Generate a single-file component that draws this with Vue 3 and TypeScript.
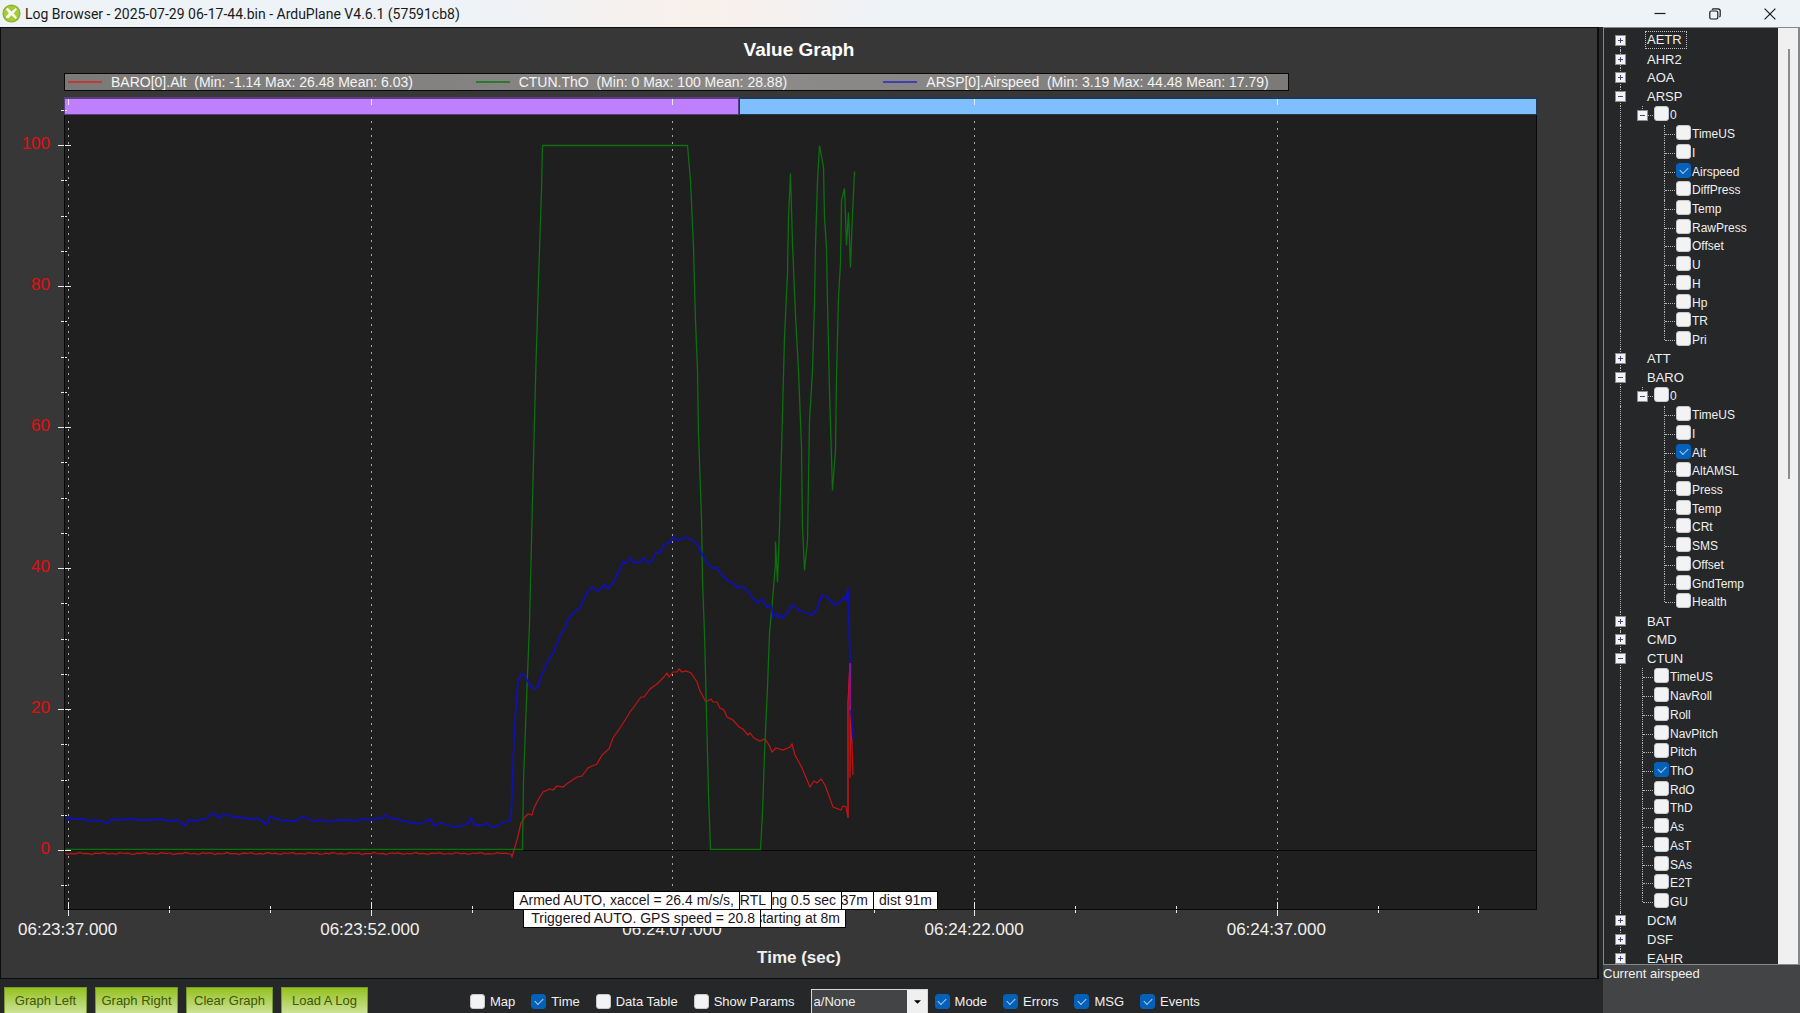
<script setup lang="ts">
import { ref } from 'vue'

interface TreeRow {
  label: string
  kind: 'root' | 'instance' | 'leaf'
  depth: number
  open?: boolean
  checked?: boolean
  last?: boolean
  focused?: boolean
}

const root = (label: string, open = false, focused = false): TreeRow => ({ label, kind: 'root', depth: 0, open, focused })
const instance = (label: string): TreeRow => ({ label, kind: 'instance', depth: 1, open: true })
const leaves = (depth: number, names: string[], checked: string): TreeRow[] =>
  names.map((label, i) => ({ label, kind: 'leaf', depth, checked: label === checked, last: i === names.length - 1 }))

const rows = ref<TreeRow[]>([
  root('AETR', false, true),
  root('AHR2'),
  root('AOA'),
  root('ARSP', true),
  instance('0'),
  ...leaves(2, ['TimeUS', 'I', 'Airspeed', 'DiffPress', 'Temp', 'RawPress', 'Offset', 'U', 'H', 'Hp', 'TR', 'Pri'], 'Airspeed'),
  root('ATT'),
  root('BARO', true),
  instance('0'),
  ...leaves(2, ['TimeUS', 'I', 'Alt', 'AltAMSL', 'Press', 'Temp', 'CRt', 'SMS', 'Offset', 'GndTemp', 'Health'], 'Alt'),
  root('BAT'),
  root('CMD'),
  root('CTUN', true),
  ...leaves(1, ['TimeUS', 'NavRoll', 'Roll', 'NavPitch', 'Pitch', 'ThO', 'RdO', 'ThD', 'As', 'AsT', 'SAs', 'E2T', 'GU'], 'ThO'),
  root('DCM'),
  root('DSF'),
  root('EAHR'),
])

const legend = [
  { color: '#c03a38', text: 'BARO[0].Alt  (Min: -1.14 Max: 26.48 Mean: 6.03)' },
  { color: '#2c7a30', text: 'CTUN.ThO  (Min: 0 Max: 100 Mean: 28.88)' },
  { color: '#4040b0', text: 'ARSP[0].Airspeed  (Min: 3.19 Max: 44.48 Mean: 17.79)' },
]

const yLabels = [100, 80, 60, 40, 20, 0]
const xLabels = ['06:23:37.000', '06:23:52.000', '06:24:07.000', '06:24:22.000', '06:24:37.000']

const majorX = [68, 371, 672, 974, 1277]
const minorX = [169, 270, 472, 572, 773, 874, 1075, 1176, 1378, 1478]
const valueY = (v: number) => Math.round(850 - v * 7.05)
const majorY = yLabels.map(valueY)
const minorY = [-5, 5, 10, 15, 25, 30, 35, 45, 50, 55, 65, 70, 75, 85, 90, 95, 105].map(valueY)

// Altitude on the ground: level with a little sensor noise.
const ground = Array.from({ length: 148 }, (_, i) => {
  const y = 853.5 + Math.sin(i * 2.3) * 0.6 + Math.sin(i * 0.9) * 0.5
  return `${65 + i * 3},${y.toFixed(1)}`
}).join(' ')

const altitude =
  ground +
  ' 509,854 511,854 512,857 514,850 517,840 521,823 525,817 528,814 532,815 534,808 538,800 543,792 550,789 553,790 557,786 563,787 568,783 577,777 582,776 588,768 592,766 597,764 602,755 609,749 613,738 622,725 630,712 636,704 641,697 644,697 650,689 657,684 663,678 667,673 669,677 673,672 677,672 679,669 682,672 686,671 691,673 697,682 700,691 706,702 711,699 713,702 717,702 720,708 724,710 727,717 733,720 739,727 743,729 748,735 750,733 754,738 760,741 765,739 769,745 772,752 776,748 783,750 790,747 792,744 795,755 802,768 810,787 814,781 817,783 821,779 825,785 833,807 841,810 843,806 846,807 848,818 848,703 850,663 850,778 851,713 853,775'

const throttle =
  '65,849 522,849 523,780 526,700 529,623 532,500 535,380 538,280 541,190 542,145 687,145 690,180 693,247 695,320 697,370 698,433 701,517 702,580 704,633 706,713 708,793 710,849 760,849 762,813 764,753 767,687 769,633 772,600 775,563 775,541 777,582 779,527 782,413 784,337 787,273 788,217 790,173 792,243 795,315 798,370 801,447 802,527 804,570 807,540 809,420 812,370 814,303 815,245 817,180 819,145 823,167 824,217 826,247 827,303 829,390 831,457 832,490 835,450 836,377 838,297 840,263 841,200 844,188 846,245 848,212 850,267 852,213 854,171'

const airspeed =
  '65,821 69,817 73,819 82,819 90,821 95,820 100,821 108,823 112,819 118,820 130,819 140,820 150,820 160,819 170,821 177,820 181,822 185,826 189,820 195,821 200,820 207,818 210,815 214,813 217,816 220,818 223,814 230,816 236,817 243,818 250,819 257,818 262,821 267,825 270,816 275,819 280,820 288,821 295,821 303,817 308,819 315,821 322,820 330,822 338,820 345,820 355,821 362,819 372,820 378,818 381,819 385,815 390,818 400,820 408,822 417,824 425,822 430,819 434,826 440,823 447,825 455,827 463,826 468,823 471,818 475,825 483,825 487,823 492,828 498,825 503,823 511,820 512,793 514,740 516,707 518,680 521,674 524,675 527,680 531,687 534,689 538,687 540,680 544,670 550,657 553,654 557,643 562,632 565,629 568,619 572,614 580,608 583,600 587,593 592,587 597,591 602,588 605,584 608,589 613,583 618,573 623,562 626,563 630,558 634,563 640,562 644,558 648,563 653,560 656,552 660,553 664,545 670,542 673,537 678,541 685,537 692,540 697,544 701,552 705,560 712,568 717,568 722,575 728,581 733,583 738,588 741,586 747,590 752,597 757,603 762,599 767,607 771,605 773,617 777,613 778,618 781,615 783,618 787,613 792,605 795,607 800,611 807,613 812,615 817,609 822,595 827,597 835,605 842,600 844,597 846,600 848,588 849,623 850,660 851,710 853,739'

// Log messages pinned to their moment on the time axis; later entries cover earlier ones.
const notes = [
  { text: 'dist 91m', from: 873, to: 938, row: 0 },
  { text: '37m', from: 836, to: 874, row: 0 },
  { text: 'ng 0.5 sec', from: 766, to: 842, row: 0 },
  { text: 'Armed AUTO, xaccel = 26.4 m/s/s,', from: 513, to: 740, row: 0 },
  { text: 'RTL', from: 739, to: 772, row: 0 },
  { text: 'starting at 8m', from: 752, to: 846, row: 1 },
  { text: 'Triggered AUTO. GPS speed = 20.8', from: 523, to: 761, row: 1 },
]
const notePlace = (n: { from: number; to: number }) => ({
  left: `${((n.from - 64) / 1473) * 100}%`,
  width: `${((n.to - n.from) / 1473) * 100}%`,
})

const actions = [
  { label: 'Graph Left', wide: false },
  { label: 'Graph Right', wide: false },
  { label: 'Clear Graph', wide: true },
  { label: 'Load A Log', wide: true },
]
const viewOptions = ref([
  { label: 'Map', on: false },
  { label: 'Time', on: true },
  { label: 'Data Table', on: false },
  { label: 'Show Params', on: false },
])
const overlayOptions = ref([
  { label: 'Mode', on: true },
  { label: 'Errors', on: true },
  { label: 'MSG', on: true },
  { label: 'Events', on: true },
])
const preset = ref('a/None')
</script>

<template>
  <div class="window">
    <header class="titlebar">
      <svg class="logo" viewBox="0 0 20 20" aria-hidden="true">
        <circle cx="10" cy="10" r="9.5" fill="#8fae2a" />
        <circle cx="10" cy="10" r="8.2" fill="#a5cb3a" />
        <path d="M4 5.5 6 4l4 3.8 4.5-3.6 1.3 1.2-3.6 4.4 3.6 4.5-1.6 1.5-4.2-4-3.4 3.2-2.4-.6.1-1.6 2.9-3z" fill="#f6faea" />
      </svg>
      <h1>Log Browser - 2025-07-29 06-17-44.bin - ArduPlane V4.6.1 (57591cb8)</h1>
      <nav class="controls">
        <button type="button" aria-label="Minimize">
          <svg viewBox="0 0 12 12"><path d="M.5 5.5h11" /></svg>
        </button>
        <button type="button" aria-label="Restore">
          <svg viewBox="0 0 12 12">
            <rect x=".8" y="3" width="8" height="8" rx="1.4" />
            <path d="M3 1.6Q3.5.8 4.6.8H9q2.2 0 2.2 2.2v4.4q0 1-.8 1.6" />
          </svg>
        </button>
        <button type="button" aria-label="Close">
          <svg viewBox="0 0 12 12"><path d="M.6.6l10.8 10.8M11.4.6.6 11.4" /></svg>
        </button>
      </nav>
    </header>

    <div class="body">
      <main class="left">
        <section class="graph">
          <h2>Value Graph</h2>
          <ul class="legend">
            <li v-for="item in legend" :key="item.text">
              <i :style="{ background: item.color }"></i>{{ item.text }}
            </li>
          </ul>
          <div class="plot-row">
            <ol class="y-labels">
              <li v-for="v in yLabels" :key="v">{{ v }}</li>
            </ol>
            <div class="plot">
              <svg class="canvas" viewBox="64 97 1473 813" preserveAspectRatio="none" role="img" aria-label="Value Graph">
                <rect x="64" y="97" width="1473" height="813" fill="#1f1f1f" />
                <g class="grid">
                  <line v-for="x in majorX" :key="x" :x1="x + 0.5" :x2="x + 0.5" y1="121" y2="900" />
                </g>
                <path d="M64 850.5H1536" stroke="#080808" />
                <polyline :points="altitude" stroke="#c41414" stroke-width="1.2" />
                <polyline :points="throttle" transform="translate(0.5 0.5)" stroke="#0c700f" stroke-width="1.3" />
                <polyline :points="airspeed" stroke="#1010b4" stroke-width="1.8" />
                <path d="M848 818V703L850 663V710" stroke="#c41414" />
                <path d="M850.5 664V710" stroke="#8a0fa0" />
                <path d="M64.5 97V909.5H1536.5V97" stroke="#080808" />
                <rect x="64" y="97" width="675" height="18" fill="#5b3d80" />
                <rect x="739" y="97" width="798" height="18" fill="#243850" />
                <rect x="65" y="99" width="673" height="15" fill="#bf80ff" />
                <rect x="740" y="99" width="796" height="15" fill="#80bfff" />
                <g stroke="#e8e8e8">
                  <path v-for="x in majorX" :key="x" :d="`M${x + 0.5} 99v6M${x + 0.5} 902v7M${x + 0.5} 910v6`" />
                  <path v-for="x in minorX" :key="x" :d="`M${x + 0.5} 906v3M${x + 0.5} 910v3`" />
                  <path v-for="y in majorY" :key="y" :d="`M58 ${y + 0.5}h6M65 ${y + 0.5}h6`" />
                  <path v-for="y in minorY" :key="y" :d="`M61 ${y + 0.5}h3M65 ${y + 0.5}h2`" />
                </g>
              </svg>
              <span v-for="n in notes" :key="n.text" class="note" :class="{ lower: n.row === 1 }" :style="notePlace(n)">{{ n.text }}</span>
            </div>
          </div>
          <ol class="x-labels">
            <li v-for="t in xLabels" :key="t">{{ t }}</li>
          </ol>
          <p class="x-title">Time (sec)</p>
        </section>

        <footer class="toolbar">
          <button v-for="a in actions" :key="a.label" type="button" class="action" :class="{ wide: a.wide }">{{ a.label }}</button>
          <div class="options">
            <label v-for="o in viewOptions" :key="o.label"><input v-model="o.on" type="checkbox" />{{ o.label }}</label>
            <span class="combo">
              <select v-model="preset" aria-label="Graph preset">
                <option>a/None</option>
              </select>
              <svg viewBox="0 0 8 4" aria-hidden="true"><path d="M0 0h8L4 4z" /></svg>
            </span>
            <label v-for="o in overlayOptions" :key="o.label"><input v-model="o.on" type="checkbox" />{{ o.label }}</label>
          </div>
        </footer>
      </main>

      <aside class="side">
        <div class="tree-box">
          <ul class="tree">
            <li v-for="(row, i) in rows" :key="i" :class="row.kind">
              <span class="cell rail" :class="{ first: i === 0 }">
                <button v-if="row.kind === 'root'" type="button" class="expander" :aria-label="`Toggle ${row.label}`">
                  <svg viewBox="0 0 9 9"><path :d="row.open ? 'M2 4.5h5' : 'M2 4.5h5M4.5 2v5'" /></svg>
                </button>
              </span>
              <span v-if="row.depth === 2" class="cell"></span>
              <span v-if="row.depth > 0" class="cell branch" :class="{ rail: row.kind === 'leaf' && !row.last, half: row.last || row.kind === 'instance' }">
                <button v-if="row.kind === 'instance'" type="button" class="expander" :aria-label="`Toggle ${row.label}`">
                  <svg viewBox="0 0 9 9"><path d="M2 4.5h5" /></svg>
                </button>
              </span>
              <span v-if="row.kind === 'root'" class="name" :class="{ focused: row.focused }">{{ row.label }}</span>
              <label v-else><input v-model="row.checked" type="checkbox" />{{ row.label }}</label>
            </li>
          </ul>
          <div class="scrollbar"><div class="thumb"></div></div>
        </div>
        <p class="hint">Current airspeed</p>
      </aside>
    </div>
  </div>
</template>

<style>
body {
  margin: 0;
  background: #262728;
}
</style>

<style scoped>
* {
  box-sizing: border-box;
}
h1,
h2,
p,
ul,
ol {
  margin: 0;
  padding: 0;
  list-style: none;
}
button {
  font: inherit;
  padding: 0;
  border: 0;
}
.window {
  height: 100vh;
  display: flex;
  flex-direction: column;
  overflow: hidden;
  background: #262728;
  color: #f0f0f0;
  font-family: 'Liberation Sans', Arial, sans-serif;
  font-size: 13px;
}

.titlebar {
  flex: none;
  height: 27px;
  display: flex;
  align-items: center;
  padding: 0 3px 0 2px;
  background: linear-gradient(90deg, #eef3f8 26%, #f9f0ea 39%, #eef3f8 50%);
  color: #1a1a1a;
}
.logo {
  width: 19px;
  height: 19px;
}
.titlebar h1 {
  flex: 1;
  margin-left: 4px;
  font: 400 14px/26px Roboto, 'Open Sans', sans-serif;
}
.controls {
  display: flex;
}
.controls button {
  width: 55px;
  height: 27px;
  display: grid;
  place-items: center;
  background: none;
}
.controls svg {
  width: 12px;
  height: 12px;
  fill: none;
  stroke: #1a1a1a;
  stroke-width: 1.2;
}

.body {
  flex: 1;
  min-height: 0;
  display: flex;
}
.left {
  flex: 1;
  min-width: 0;
  display: flex;
  flex-direction: column;
}
.graph {
  flex: 1;
  min-height: 0;
  display: flex;
  flex-direction: column;
  padding-bottom: 10px;
  margin-right: 4px;
  background: #373737;
  border: 1px solid #0c0c0c;
  border-right-width: 2px;
}
.graph h2 {
  padding-bottom: 1px;
  font-size: 19px;
  line-height: 44px;
  text-align: center;
  color: #fff;
}
.legend {
  display: flex;
  width: 1225px;
  height: 18px;
  margin-left: 63px;
  border: 1px solid #080808;
  background: linear-gradient(90deg, #7c7a78, #8c8a88 60%, #7c7a78);
  font-size: 14px;
  line-height: 16px;
  color: #f4f4f4;
}
.legend li {
  flex: 1;
  display: flex;
  align-items: center;
  gap: 9px;
  padding-left: 3px;
  white-space: pre;
}
.legend i {
  width: 34px;
  height: 2px;
}
.plot-row {
  flex: 1;
  min-height: 0;
  display: flex;
  margin: 6px 60px 0 0;
}
.y-labels {
  width: 63px;
  display: flex;
  flex-direction: column;
  justify-content: space-between;
  padding: 37px 14px 51px 0;
  font-size: 17px;
  line-height: 20px;
  text-align: right;
  color: #e01010;
}
.plot {
  position: relative;
  flex: 1;
  min-width: 0;
}
.canvas {
  display: block;
  width: 100%;
  height: 100%;
  overflow: visible;
  fill: none;
}
.grid line {
  stroke: #a8a8a8;
  stroke-dasharray: 2 5;
}
.note {
  position: absolute;
  bottom: 0;
  height: 19px;
  display: flex;
  justify-content: flex-end;
  padding: 0 5px;
  overflow: hidden;
  background: #fff;
  border: 1px solid #000;
  color: #1c1420;
  font-size: 14px;
  line-height: 17px;
  white-space: nowrap;
}
.note.lower {
  bottom: -18px;
}
.x-labels {
  display: flex;
  justify-content: space-between;
  margin: 10px 271px 0 17px;
  font-size: 17px;
  line-height: 20px;
}
.x-title {
  margin-top: 8px;
  font-size: 17px;
  font-weight: 700;
  line-height: 20px;
  text-align: center;
}

.toolbar {
  flex: none;
  height: 34px;
  display: flex;
  align-items: flex-end;
  gap: 8px;
  padding-left: 4px;
}
.action {
  width: 83px;
  height: 26px;
  background: linear-gradient(#94c11f, #cde296);
  border: 1px solid #799a30;
  border-bottom: 0;
  color: #40570a;
}
.action.wide {
  width: 87px;
}
.options {
  display: flex;
  align-items: center;
  height: 24px;
  gap: 16px;
  margin-left: 94px;
}
label {
  display: flex;
  align-items: center;
  gap: 5px;
  white-space: nowrap;
}
input[type='checkbox'] {
  appearance: none;
  flex: none;
  width: 15px;
  height: 15px;
  margin: 0;
  display: grid;
  place-items: center;
  border: 1px solid #c8c8c8;
  border-radius: 3px;
  background: #f3f3f3;
}
input[type='checkbox']:checked {
  background: #0560b8;
  border-color: #0560b8;
}
input[type='checkbox']:checked::after {
  content: '';
  width: 7px;
  height: 4px;
  margin-bottom: 2px;
  border: solid #a8d2f6;
  border-width: 0 0 1px 1px;
  transform: rotate(-45deg);
}
.combo {
  position: relative;
  margin-right: -9px;
}
.combo select {
  appearance: none;
  display: block;
  width: 117px;
  height: 24px;
  padding: 0 2px;
  border: 1px solid #d8d8d8;
  border-bottom: 0;
  border-radius: 0;
  background: linear-gradient(90deg, #434445 95px, #f0f0f0 95px);
  color: #f0f0f0;
  font: inherit;
}
.combo svg {
  position: absolute;
  right: 7px;
  top: 11px;
  width: 7px;
  height: 4px;
}

.side {
  flex: none;
  width: 197px;
  display: flex;
  flex-direction: column;
  background: #434445;
}
.tree-box {
  flex: 1;
  min-height: 0;
  display: flex;
  overflow: hidden;
  border: 1px solid #85878a;
  border-right-width: 2px;
  background: #262728;
}
.tree {
  flex: 1;
  height: calc(100% + 4px);
  padding: 3px 0 0 5px;
  display: flex;
  flex-direction: column;
}
.tree li {
  flex: 1;
  min-height: 0;
  display: flex;
  align-items: center;
  font-size: 12px;
}
.tree li.root {
  font-size: 13px;
}
.tree label {
  gap: 1px;
  margin-left: 1px;
}
.tree input {
  margin-bottom: 3px;
}
.cell {
  position: relative;
  flex: none;
  width: 22px;
  align-self: stretch;
  display: grid;
  place-items: center;
}
.cell.rail::before,
.cell.half::before {
  content: '';
  position: absolute;
  left: 11px;
  top: 0;
  bottom: 0;
  border-left: 1px dotted #b4b4b4;
}
.cell.half::before {
  bottom: 50%;
}
.cell.rail.first::before {
  top: 50%;
}
.cell.branch::after {
  content: '';
  position: absolute;
  left: 12px;
  right: 0;
  top: 50%;
  border-top: 1px dotted #b4b4b4;
}
.expander {
  position: relative;
  z-index: 1;
  width: 11px;
  height: 11px;
  background: #f4f4f6;
  border: 1px solid #8e8e8e;
}
.expander svg {
  display: block;
  width: 9px;
  height: 9px;
  fill: none;
  stroke: #3b4a8c;
}
.name {
  margin-left: 14px;
  padding: 0 1px;
  border: 1px dotted transparent;
}
.name.focused {
  padding-right: 4px;
  line-height: 16px;
  border-color: #c0c0c0;
}
.scrollbar {
  width: 20px;
  height: 100%;
  padding-top: 21px;
  background: #f0f0f0;
}
.thumb {
  width: 2px;
  height: 47%;
  margin-left: 10px;
  background: #8c8c8c;
}
.hint {
  height: 48px;
  line-height: 18px;
}
</style>
